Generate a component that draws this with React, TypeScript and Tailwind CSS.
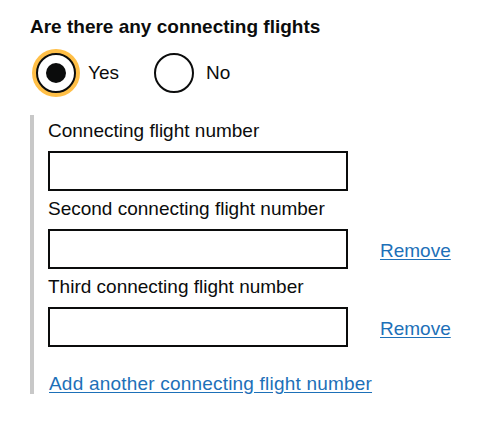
import React, { useState } from "react";

const FONT = { fontFamily: '"Liberation Sans", Arial, Helvetica, sans-serif' };

function Radio({ label, checked, focused }: { label: string; checked?: boolean; focused?: boolean }) {
  return (
    <label className="flex items-center">
      <span
        className={
          "flex h-10 w-10 items-center justify-center rounded-full border-2 border-[#0b0c0c] bg-white " +
          (focused ? "shadow-[0_0_0_4px_#ffbf47]" : "")
        }
      >
        {checked && <span className="h-5 w-5 rounded-full bg-[#0b0c0c]" />}
      </span>
      <span className="ml-3 text-[19px] leading-5 text-[#0b0c0c]">{label}</span>
    </label>
  );
}

function FlightField({ label, removable }: { label: string; removable?: boolean }) {
  return (
    <div className="mb-[8px]">
      <div className="mb-[10px] text-[19px] leading-5 text-[#0b0c0c]">{label}</div>
      <div className="flex items-center">
        <div className="h-10 w-[300px] border-2 border-[#0b0c0c] bg-white" />
        {removable && (
          <a href="#" className="ml-[32px] mt-[4px] text-[19px] leading-5 text-[#1d70b8] underline underline-offset-2">
            Remove
          </a>
        )}
      </div>
    </div>
  );
}

export default function App() {
  const [yes] = useState(true);
  return (
    <div className="min-h-[432px] w-[503px] bg-white pl-[30px] pt-[17px]" style={FONT}>
      <h2 className="text-[19px] font-bold leading-5 text-[#0b0c0c]">Are there any connecting flights</h2>
      <div className="mt-4 flex gap-[35px] pl-[6px]">
        <Radio label="Yes" checked={yes} focused />
        <Radio label="No" />
      </div>
      <div className="mt-[22px] border-l-4 border-[#c8c8c8] pl-[14px] pt-[6px]">
        <FlightField label="Connecting flight number" />
        <FlightField label="Second connecting flight number" removable />
        <FlightField label="Third connecting flight number" removable />
        <a
          href="#"
          className="mt-[27px] ml-px block w-fit text-[19px] leading-5 tracking-[0.2px] text-[#1d70b8] underline underline-offset-2"
        >
          Add another connecting flight number
        </a>
      </div>
    </div>
  );
}
